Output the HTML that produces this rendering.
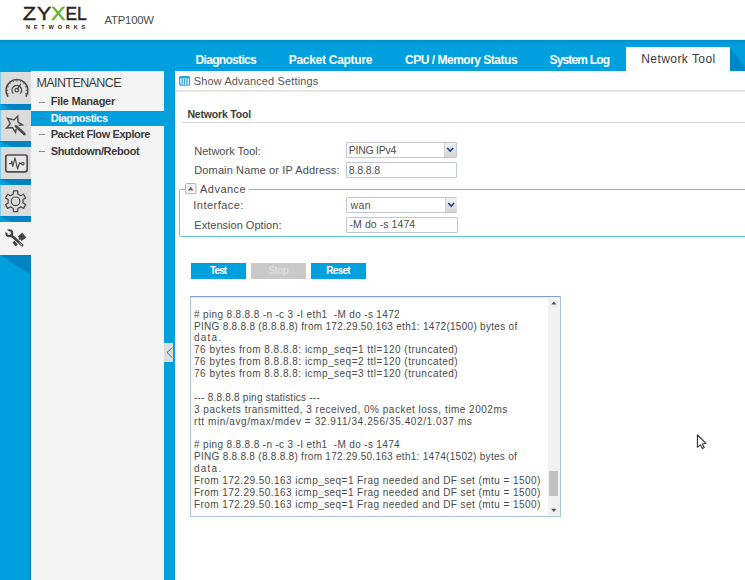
<!DOCTYPE html>
<html><head><meta charset="utf-8"><title>ATP100W - Network Tool</title>
<style>
*{box-sizing:border-box;margin:0;padding:0}
html,body{width:745px;height:580px;overflow:hidden;background:#fff}
body{position:relative;font-family:"Liberation Sans",sans-serif}
.a{position:absolute}
.t{position:absolute;white-space:pre;line-height:14px;height:14px}
.o{position:absolute;white-space:pre;font-family:"Liberation Sans",sans-serif}
.tile{position:absolute;left:1px;width:30px;height:31.5px;background:#dcdcdc}
.band{position:absolute;left:0;width:31px;height:6px;background:#0083c4}
.band:after{content:"";position:absolute;left:0;top:0;width:12px;height:6px;background:#009fde;clip-path:polygon(0 0,0 100%,100% 100%)}
.dash{position:absolute;left:39px;width:6px;height:1px;background:#8a8a8a}
.box{position:absolute;background:#fff;border:1px solid #c3c7d3;border-radius:1px}
.trig{position:absolute;width:12px;height:14px;background:linear-gradient(#f2f2f2,#d4d4d4);border-left:1px solid #cfcfcf}
.btn{position:absolute;top:263.4px;height:15.6px;width:55.2px;background:#009fde}
</style></head><body>
<!-- header -->
<div class="a" style="left:0;top:38.6px;width:745px;height:1.4px;background:#d9f1fb"></div>
<div class="a" style="left:0;top:39.8px;width:745px;height:31.4px;background:#009fde"></div>
<div class="a" style="left:0;top:39.8px;width:745px;height:5px;background:linear-gradient(#008fcb,#009fde)"></div>
<!-- logo -->
<svg class="a" style="left:0;top:0" width="170" height="40" viewBox="0 0 170 40">
 <text transform="translate(22.83 20.1) scale(1.153 1)" font-family="Liberation Sans, sans-serif" font-size="18.8" fill="#2a2320" stroke="#2a2320" stroke-width="0.45">Z</text>
 <text transform="translate(36.99 20.1) scale(1.142 1)" font-family="Liberation Sans, sans-serif" font-size="18.8" fill="#2a2320" stroke="#2a2320" stroke-width="0.45">Y</text>
 <text transform="translate(51.09 20.1) scale(1.142 1)" font-family="Liberation Sans, sans-serif" font-size="18.8" fill="#62b22f" stroke="#62b22f" stroke-width="0.45">X</text>
 <text transform="translate(65.53 20.1) scale(0.922 1)" font-family="Liberation Sans, sans-serif" font-size="18.8" fill="#2a2320" stroke="#2a2320" stroke-width="0.45">E</text>
 <text transform="translate(77.00 20.1) scale(0.939 1)" font-family="Liberation Sans, sans-serif" font-size="18.8" fill="#2a2320" stroke="#2a2320" stroke-width="0.45">L</text>
</svg>
<!-- left column -->
<div class="a" style="left:0;top:71.2px;width:31px;height:509px;background:#009fde"></div>
<div class="a" style="left:30.2px;top:255px;width:1px;height:325px;background:#0086c2"></div>
<div class="a" style="left:31px;top:71.4px;width:133.5px;height:509px;background:#f4f4f4"></div>
<div class="a" style="left:164.2px;top:71.2px;width:10.9px;height:509px;background:#009fde"></div>
<div class="a" style="left:0;top:72px;width:1px;height:150px;background:#7fcdf0"></div>
<div class="tile" style="top:72px"></div><div class="band" style="top:103.5px"></div>
<div class="tile" style="top:109.5px"></div><div class="band" style="top:141px"></div>
<div class="tile" style="top:147px"></div><div class="band" style="top:178.7px"></div>
<div class="tile" style="top:184.5px"></div><div class="band" style="top:216.2px"></div>
<div class="a" style="left:0;top:222px;width:32px;height:32.8px;background:#f4f4f4"></div>
<div class="a" style="left:0;top:254.8px;width:31px;height:20px;background:#0083c4;clip-path:polygon(0 0,100% 0,100% 100%)"></div>
<svg class="a" style="left:0;top:72px" width="32" height="32" viewBox="0 0 32 32"><path d="M7.69 24.10 A10.9 10.9 0 1 1 26.21 24.10" fill="none" stroke="#4d4d4d" stroke-width="1.6" stroke-linecap="round"/><path d="M7.23 22.33 L8.81 21.69 M6.45 18.32 L8.15 18.32 M7.26 14.31 L8.83 14.96 M9.54 10.91 L10.74 12.12 M12.94 8.65 L13.59 10.22 M16.95 7.85 L16.95 9.55 M20.96 8.65 L20.31 10.22 M24.36 10.91 L23.16 12.12 M26.64 14.31 L25.07 14.96 M27.45 18.32 L25.75 18.32 M26.67 22.33 L25.09 21.69" stroke="#4d4d4d" stroke-width="0.9" fill="none"/><path d="M12.98 21.10 A4.8 4.8 0 1 1 20.62 21.10" fill="none" stroke="#4d4d4d" stroke-width="1.4" stroke-linecap="round"/><circle cx="16.8" cy="18.2" r="1.75" fill="none" stroke="#4d4d4d" stroke-width="1.3"/><path d="M17.8 16.7 L20.5 12.4" stroke="#4d4d4d" stroke-width="1.3" stroke-linecap="round"/></svg>
<svg class="a" style="left:0;top:109.5px" width="32" height="32" viewBox="0 0 32 32"><path d="M19.3 15.2 L22.4 14.8 L18 12 L17.7 6.1 L14 9.9 L7.5 8.3 L10.2 13.6 L6.5 18.2 L12.4 17.6 L15.5 22.3 L16.1 19.4" fill="none" stroke="#4d4d4d" stroke-width="1.45" stroke-linejoin="miter" stroke-linecap="round"/><path d="M16 16.2 L24.4 24.1" stroke="#4d4d4d" stroke-width="2.7" stroke-linecap="round"/></svg>
<svg class="a" style="left:0;top:147px" width="32" height="32" viewBox="0 0 32 32"><rect x="5.8" y="8" width="21.4" height="16.8" rx="2" fill="#e6e6e6" stroke="#4d4d4d" stroke-width="1.7"/><path d="M9 16.6 H11 L11.8 14.2 L12.8 19.4 L15 10.8 L17.6 22 L19.6 15.6 L20.4 16.6 H21.4" fill="none" stroke="#4d4d4d" stroke-width="1.2" stroke-linejoin="round"/><circle cx="22.8" cy="16.6" r="1.3" fill="none" stroke="#4d4d4d" stroke-width="1.1"/></svg>
<svg class="a" style="left:0;top:184.5px" width="32" height="32" viewBox="0 0 32 32"><path d="M13.35 9.04 L13.49 5.91 L17.71 5.91 L17.85 9.04 L20.76 10.72 L23.54 9.28 L25.65 12.93 L23.01 14.61 L23.01 17.99 L25.65 19.67 L23.54 23.32 L20.76 21.88 L17.85 23.56 L17.71 26.69 L13.49 26.69 L13.35 23.56 L10.44 21.88 L7.66 23.32 L5.55 19.67 L8.19 17.99 L8.19 14.61 L5.55 12.93 L7.66 9.28 L10.44 10.72Z" fill="none" stroke="#4d4d4d" stroke-width="1.3" stroke-linejoin="round"/><circle cx="15.6" cy="16.3" r="4.3" fill="none" stroke="#4d4d4d" stroke-width="1.2"/></svg>
<svg class="a" style="left:0;top:222px" width="32" height="33" viewBox="0 0 32 33"><path d="M22.2 10.6 L26.2 15.4 L21.6 19 L17.8 14.4 Z" fill="#444"/><path d="M20 16.6 L15.2 20.4" stroke="#444" stroke-width="1.8"/><path d="M14.6 18.6 L12.4 20.4 L15.6 24.6 L17.8 22.8Z" fill="#444"/><path d="M11.4 13.4 L22.2 23.2" stroke="#f4f4f4" stroke-width="4.2" stroke-linecap="round"/><path d="M11.4 13.4 L22.2 23.2" stroke="#444" stroke-width="2.7" stroke-linecap="round"/><circle cx="9.3" cy="11.2" r="2.9" fill="none" stroke="#444" stroke-width="2.1"/><path d="M9.3 11.2 L5 7.6" stroke="#f4f4f4" stroke-width="2.6"/><path d="M19.6 21 L22 23.1" stroke="#f4f4f4" stroke-width="0.8" stroke-linecap="round"/></svg>

<!-- menu -->
<div class="a" style="left:31px;top:110.5px;width:134px;height:15px;background:#009fde"></div>
<div class="dash" style="top:101.5px"></div>
<div class="dash" style="top:117.8px;background:#2f7fa8"></div>
<div class="dash" style="top:134.2px"></div>
<div class="dash" style="top:151px"></div>
<!-- splitter handle -->
<div class="a" style="left:164.3px;top:343px;width:8.4px;height:19.4px;background:#dcdcdc"></div>
<svg class="a" style="left:164px;top:343px" width="10" height="20" viewBox="0 0 10 20"><path d="M8.4 4.4 L3 9.5 L8.4 14.7" fill="none" stroke="#555" stroke-width="0.9"/></svg>
<!-- active tab -->
<div class="a" style="left:626px;top:47.4px;width:104px;height:25px;background:#fff"></div>
<div class="a" style="left:730px;top:47.4px;width:18px;height:23.6px;background:#0089c8;clip-path:polygon(0 0,0 100%,100% 100%)"></div>
<!-- toolbar -->
<svg class="a" style="left:179px;top:76px" width="12" height="10" viewBox="0 0 12 10"><rect x="0.6" y="0.6" width="10" height="8.6" rx="1.2" fill="#cfeafa" stroke="#2aa3e0" stroke-width="1.1"/><path d="M3.2 2.4V8.6M5.6 2.4V8.6M8 2.4V8.6" stroke="#2aa3e0" stroke-width="1"/><path d="M1 1.6H10.2" stroke="#2aa3e0" stroke-width="1.4"/></svg>
<div class="a" style="left:175px;top:90px;width:570px;height:2px;background:linear-gradient(#dcdcdc,#f0f0f0)"></div>
<div class="a" style="left:182px;top:122px;width:563px;height:1px;background:#d8d8d8"></div>
<!-- fieldset -->
<div class="a" style="left:179px;top:189.3px;width:600px;height:47.4px;border:1.1px solid #62c4ea;border-radius:1.5px"></div>
<div class="a" style="left:184.6px;top:186px;width:64px;height:8px;background:#fff"></div>
<svg class="a" style="left:185.4px;top:182.6px" width="12" height="12" viewBox="0 0 12 12"><rect x="0.5" y="0.5" width="10.4" height="10.2" rx="1" fill="#f2f2f2" stroke="#a9a9a9" stroke-width="0.9"/><path d="M3 7.4 L5.7 3.6 L8.4 7.4Z" fill="#666"/></svg>
<!-- inputs -->
<div class="box" style="left:345.6px;top:142px;width:111px;height:15.8px"></div><div class="trig" style="left:444px;top:142.9px"></div>
<div class="box" style="left:345.6px;top:161.8px;width:111.3px;height:16.2px"></div>
<div class="box" style="left:346.4px;top:196.9px;width:111px;height:15.8px"></div><div class="trig" style="left:444.8px;top:197.8px"></div>
<div class="box" style="left:346.4px;top:216.6px;width:111.3px;height:16.2px"></div>
<svg class="a" style="left:446px;top:146px" width="9" height="8" viewBox="0 0 9 8"><path d="M1.2 2 L4.2 5 L7.2 2" fill="none" stroke="#1f3f8c" stroke-width="1.6"/></svg>
<svg class="a" style="left:446.8px;top:200.9px" width="9" height="8" viewBox="0 0 9 8"><path d="M1.2 2 L4.2 5 L7.2 2" fill="none" stroke="#1f3f8c" stroke-width="1.6"/></svg>
<!-- buttons -->
<div class="btn" style="left:190.7px"></div>
<div class="btn" style="left:251px;background:#c9c9c9"></div>
<div class="btn" style="left:311px"></div>
<!-- output -->
<div class="a" style="left:189.8px;top:295.7px;width:371px;height:221.3px;border:1px solid #adc3de;border-top:1.4px solid #7f9fc6;background:#fff;box-shadow:inset 0 1px 2px #e6e6e6"></div>
<div class="a" style="left:547.8px;top:297.2px;width:12px;height:218.8px;background:#f1f1f1"></div>
<div class="a" style="left:548.7px;top:471px;width:9.8px;height:25px;background:#c1c1c1"></div>
<svg class="a" style="left:549px;top:299px" width="10" height="8" viewBox="0 0 10 8"><path d="M2.2 5.6 L4.8 2.4 L7.4 5.6Z" fill="#505050"/></svg>
<svg class="a" style="left:549px;top:506px" width="10" height="8" viewBox="0 0 10 8"><path d="M2.2 2.8 L4.8 6 L7.4 2.8Z" fill="#505050"/></svg>
<div class="t" style="left:194.00px;top:307.74px;font-size:10px;color:#4a4a4a;letter-spacing:0.354px"># ping 8.8.8.8 -n -c 3 -I eth1  -M do -s 1472</div>
<div class="t" style="left:194.00px;top:319.61px;font-size:10px;color:#4a4a4a;letter-spacing:0.289px">PING 8.8.8.8 (8.8.8.8) from 172.29.50.163 eth1: 1472(1500) bytes of</div>
<div class="t" style="left:194.00px;top:331.49px;font-size:10px;color:#4a4a4a;letter-spacing:1.234px">data.</div>
<div class="t" style="left:194.00px;top:343.36px;font-size:10px;color:#4a4a4a;letter-spacing:0.495px">76 bytes from 8.8.8.8: icmp_seq=1 ttl=120 (truncated)</div>
<div class="t" style="left:194.00px;top:355.24px;font-size:10px;color:#4a4a4a;letter-spacing:0.495px">76 bytes from 8.8.8.8: icmp_seq=2 ttl=120 (truncated)</div>
<div class="t" style="left:194.00px;top:367.11px;font-size:10px;color:#4a4a4a;letter-spacing:0.495px">76 bytes from 8.8.8.8: icmp_seq=3 ttl=120 (truncated)</div>
<div class="t" style="left:194.00px;top:390.86px;font-size:10px;color:#4a4a4a;letter-spacing:0.227px">--- 8.8.8.8 ping statistics ---</div>
<div class="t" style="left:194.00px;top:402.74px;font-size:10px;color:#4a4a4a;letter-spacing:0.506px">3 packets transmitted, 3 received, 0% packet loss, time 2002ms</div>
<div class="t" style="left:194.00px;top:414.61px;font-size:10px;color:#4a4a4a;letter-spacing:0.595px">rtt min/avg/max/mdev = 32.911/34.256/35.402/1.037 ms</div>
<div class="t" style="left:194.00px;top:438.36px;font-size:10px;color:#4a4a4a;letter-spacing:0.354px"># ping 8.8.8.8 -n -c 3 -I eth1  -M do -s 1474</div>
<div class="t" style="left:194.00px;top:450.24px;font-size:10px;color:#4a4a4a;letter-spacing:0.283px">PING 8.8.8.8 (8.8.8.8) from 172.29.50.163 eth1: 1474(1502) bytes of</div>
<div class="t" style="left:194.00px;top:462.11px;font-size:10px;color:#4a4a4a;letter-spacing:1.234px">data.</div>
<div class="t" style="left:194.00px;top:473.99px;font-size:10px;color:#4a4a4a;letter-spacing:0.443px">From 172.29.50.163 icmp_seq=1 Frag needed and DF set (mtu = 1500)</div>
<div class="t" style="left:194.00px;top:485.86px;font-size:10px;color:#4a4a4a;letter-spacing:0.443px">From 172.29.50.163 icmp_seq=1 Frag needed and DF set (mtu = 1500)</div>
<div class="t" style="left:194.00px;top:497.74px;font-size:10px;color:#4a4a4a;letter-spacing:0.443px">From 172.29.50.163 icmp_seq=1 Frag needed and DF set (mtu = 1500)</div>
<div class="t" style="left:195.60px;top:52.84px;font-size:12px;font-weight:bold;color:#fff;letter-spacing:-0.694px">Diagnostics</div>
<div class="t" style="left:288.70px;top:52.84px;font-size:12px;font-weight:bold;color:#fff;letter-spacing:-0.277px">Packet Capture</div>
<div class="t" style="left:405.10px;top:52.84px;font-size:12px;font-weight:bold;color:#fff;letter-spacing:-0.494px">CPU / Memory Status</div>
<div class="t" style="left:549.50px;top:52.84px;font-size:12px;font-weight:bold;color:#fff;letter-spacing:-0.832px">System Log</div>
<div class="t" style="left:641.20px;top:52.44px;font-size:12px;font-weight:normal;color:#3a3a3a;letter-spacing:0.446px">Network Tool</div>
<div class="t" style="left:36.50px;top:75.67px;font-size:12.5px;font-weight:normal;color:#3c3c3c;letter-spacing:-0.594px">MAINTENANCE</div>
<div class="t" style="left:50.70px;top:94.49px;font-size:11px;font-weight:bold;color:#3c3c3c;letter-spacing:-0.242px">File Manager</div>
<div class="t" style="left:50.70px;top:110.89px;font-size:11px;font-weight:bold;color:#fff;letter-spacing:-0.493px">Diagnostics</div>
<div class="t" style="left:50.70px;top:127.09px;font-size:11px;font-weight:bold;color:#3c3c3c;letter-spacing:-0.404px">Packet Flow Explore</div>
<div class="t" style="left:50.70px;top:143.79px;font-size:11px;font-weight:bold;color:#3c3c3c;letter-spacing:-0.366px">Shutdown/Reboot</div>
<div class="t" style="left:193.80px;top:73.99px;font-size:11px;font-weight:normal;color:#555;letter-spacing:0.129px">Show Advanced Settings</div>
<div class="t" style="left:187.40px;top:107.36px;font-size:10.5px;font-weight:bold;color:#3c3c3c;letter-spacing:-0.173px">Network Tool</div>
<div class="t" style="left:194.30px;top:143.59px;font-size:11px;font-weight:normal;color:#4c4c4c;letter-spacing:0.002px">Network Tool:</div>
<div class="t" style="left:194.30px;top:163.49px;font-size:11px;font-weight:normal;color:#4c4c4c;letter-spacing:0.120px">Domain Name or IP Address:</div>
<div class="t" style="left:200.00px;top:181.89px;font-size:11px;font-weight:normal;color:#4c4c4c;letter-spacing:0.485px">Advance</div>
<div class="t" style="left:193.30px;top:198.39px;font-size:11px;font-weight:normal;color:#4c4c4c;letter-spacing:0.466px">Interface:</div>
<div class="t" style="left:194.30px;top:218.19px;font-size:11px;font-weight:normal;color:#4c4c4c;letter-spacing:0.020px">Extension Option:</div>
<div class="t" style="left:348.80px;top:143.16px;font-size:10.5px;font-weight:normal;color:#4c4c4c;letter-spacing:-0.257px">PING IPv4</div>
<div class="t" style="left:348.80px;top:162.86px;font-size:10.5px;font-weight:normal;color:#4c4c4c;letter-spacing:-0.145px">8.8.8.8</div>
<div class="t" style="left:350.50px;top:197.66px;font-size:10.5px;font-weight:normal;color:#4c4c4c;letter-spacing:0.439px">wan</div>
<div class="t" style="left:349.50px;top:217.36px;font-size:10.5px;font-weight:normal;color:#4c4c4c;letter-spacing:0.072px">-M do -s 1474</div>
<div class="t" style="left:210.00px;top:264.24px;font-size:10px;font-weight:bold;color:#fff;letter-spacing:-0.896px">Test</div>
<div class="t" style="left:268.60px;top:264.24px;font-size:10px;font-weight:bold;color:#dedede;letter-spacing:-0.669px">Stop</div>
<div class="t" style="left:326.30px;top:264.24px;font-size:10px;font-weight:bold;color:#fff;letter-spacing:-0.727px">Reset</div>
<div class="t" style="left:104.60px;top:12.88px;font-size:11.3px;font-weight:normal;color:#4a4a4a;letter-spacing:-0.213px">ATP100W</div>
<div class="t" style="left:26.00px;top:20.26px;font-size:5.6px;font-weight:bold;color:#2a2320;letter-spacing:3.800px">NETWORKS</div>
<!-- cursor -->
<svg class="a" style="left:694px;top:432px" width="16" height="20" viewBox="0 0 16 20"><path d="M3.4 3 L3.4 15.3 L6.3 12.8 L8.4 16.6 L10.2 15.6 L8.3 12 L12.1 11.3 Z" fill="#fff" stroke="#333" stroke-width="1.1" stroke-linejoin="round"/></svg>
</body></html>
